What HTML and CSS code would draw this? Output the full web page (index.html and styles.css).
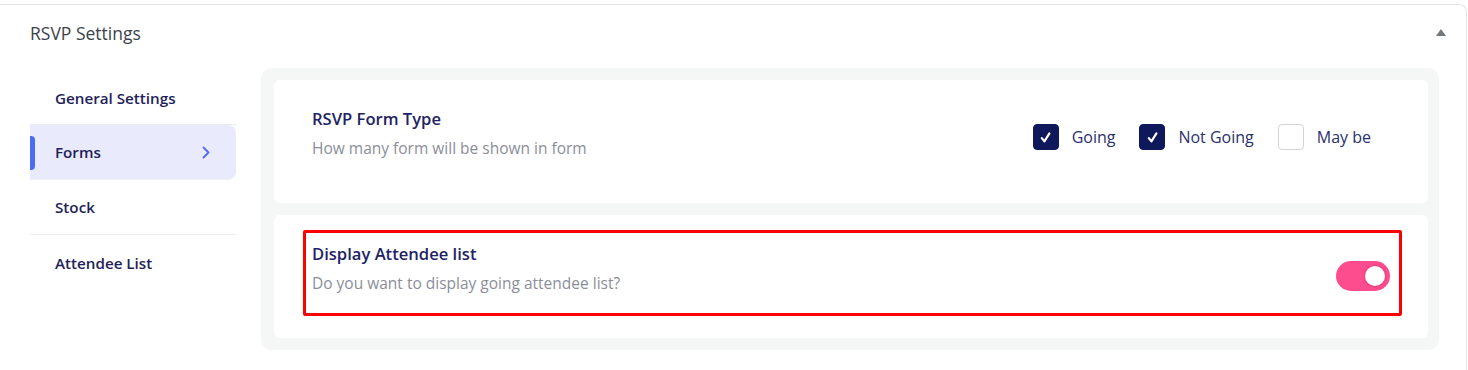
FILE: index.html
```html
<!DOCTYPE html>
<html>
<head>
<meta charset="utf-8">
<link rel="stylesheet" href="styles.css">
</head>
<body>
<div class="box">
  <div class="box-head">
    <h2 class="box-title">RSVP Settings</h2>
    <span class="toggle-arrow"></span>
  </div>
  <div class="box-body">
    <nav class="side">
      <div class="side-item">General Settings</div>
      <div class="side-item active">Forms
        <svg class="chev" width="8" height="13" viewBox="0 0 8 13"><path d="M1.5 1.5 L6.5 6.5 L1.5 11.5" fill="none" stroke="#5468f2" stroke-width="1.8" stroke-linecap="round" stroke-linejoin="round"/></svg>
      </div>
      <div class="side-item">Stock</div>
      <div class="side-item last">Attendee List</div>
    </nav>
    <main class="panel">
      <section class="card">
        <div class="row">
          <div class="text">
            <div class="title">RSVP Form Type</div>
            <div class="sub">How many form will be shown in form</div>
          </div>
          <div class="checks">
            <label class="check"><span class="cb on"><svg width="13" height="13" viewBox="0 0 12 12"><path d="M2.6 6.6 L5 9.6 L9.6 2.2" fill="none" stroke="#fff" stroke-width="2" stroke-linecap="round" stroke-linejoin="round"/></svg></span>Going</label>
            <label class="check"><span class="cb on"><svg width="13" height="13" viewBox="0 0 12 12"><path d="M2.6 6.6 L5 9.6 L9.6 2.2" fill="none" stroke="#fff" stroke-width="2" stroke-linecap="round" stroke-linejoin="round"/></svg></span>Not Going</label>
            <label class="check"><span class="cb"></span>May be</label>
          </div>
        </div>
      </section>
      <section class="card">
        <div class="row marked">
          <div class="text">
            <div class="title">Display Attendee list</div>
            <div class="sub">Do you want to display going attendee list?</div>
          </div>
          <span class="switch"><span class="knob"></span></span>
        </div>
      </section>
    </main>
  </div>
</div>
</body>
</html>
```

FILE: styles.css
```css
* { box-sizing: border-box; }
html, body { margin: 0; padding: 0; background: #fff; }
body {
  font-family: "Open Sans", "Noto Sans", "Liberation Sans", sans-serif;
  height: 370px;
  overflow: hidden;
}
.box {
  margin: 4px 1px 0 -10px;
  border: 1px solid #e2e4e7;
  border-bottom: none;
  border-radius: 8px 8px 0 0;
  height: 366px;
}
.box-head {
  height: 56px;
  display: flex;
  align-items: center;
  justify-content: space-between;
  padding: 0 20px 0 39px;
}
.box-title {
  margin: 0;
  font-size: 17.5px;
  font-weight: 500;
  color: #3c434a;
}
.toggle-arrow {
  width: 0; height: 0;
  border-left: 5px solid transparent;
  border-right: 5px solid transparent;
  border-bottom: 7px solid #72777c;
  margin-top: -2px;
}
.box-body {
  display: flex;
  gap: 25px;
  padding: 7px 27px 0 39px;
}
.side {
  width: 206px;
  flex: none;
  margin-top: 1px;
}
.side-item {
  height: 55px;
  border-bottom: 1px solid #ececf0;
  display: flex;
  align-items: center;
  justify-content: space-between;
  padding: 0 26px 0 25px;
  font-size: 15.2px;
  font-weight: 600;
  color: #1e2259;
  position: relative;
}
.side-item:first-child { height: 56px; padding-top: 2px; }
.side-item.last { border-bottom: none; }
.side-item.active {
  background: #e9eafc;
  border-radius: 0 8px 8px 0;
  border-bottom-color: #f0f0f4;
}
.side-item.active::before {
  content: "";
  position: absolute;
  left: 0; top: 11px;
  width: 5px; height: 34px;
  background: #4d6af5;
  border-radius: 0 4px 4px 0;
}
.panel {
  flex: 1;
  background: #f5f7f7;
  border-radius: 10px;
  padding: 12px 11px 12px 13px;
  display: flex;
  flex-direction: column;
  gap: 12px;
}
.card {
  background: #fff;
  border-radius: 6px;
  padding: 15px 26px 22px 29px;
}
.row {
  border: 3px solid transparent;
  padding: 9px 9px 20px 6px;
  display: flex;
  justify-content: space-between;
  align-items: flex-start;
}
.row.marked {
  border-color: #ff0000;
  border-radius: 2px;
}
.title {
  font-size: 16.6px;
  line-height: 24px;
  font-weight: 600;
  color: #1d2366;
  margin-bottom: 7px;
}
.sub {
  font-size: 15.5px;
  line-height: 20px;
  color: #8b8e99;
}
.checks {
  display: flex;
  gap: 24px;
  margin-top: 17px;
  margin-right: 19px;
}
.check {
  display: flex;
  align-items: center;
  gap: 13px;
  font-size: 16px;
  color: #2a306e;
}
.cb {
  width: 26px; height: 26px;
  border-radius: 4px;
  border: 1px solid #d3d4d8;
  background: #fff;
  display: flex;
  align-items: center;
  justify-content: center;
}
.cb.on {
  background: #10185c;
  border-color: #10185c;
}
.switch {
  width: 54px; height: 30px;
  border-radius: 15px;
  background: #fe4d8f;
  margin-top: 19px;
  display: flex;
  align-items: center;
  justify-content: flex-end;
  padding-right: 5px;
}
.knob {
  width: 20px; height: 20px;
  border-radius: 50%;
  background: #fff;
  box-shadow: 0 0 2px 1px rgba(200, 40, 100, 0.35);
}
```
